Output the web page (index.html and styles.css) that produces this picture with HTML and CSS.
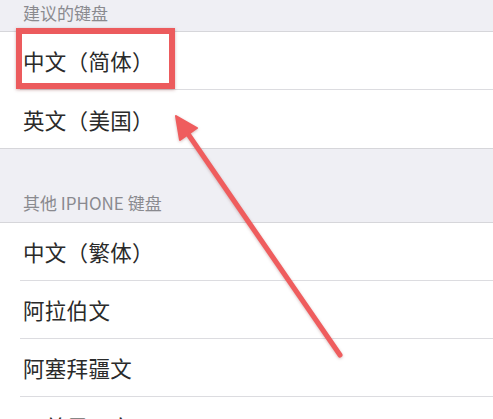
FILE: index.html
```html
<!DOCTYPE html>
<html lang="zh-CN">
<head>
<meta charset="utf-8">
<link rel="stylesheet" href="styles.css">
</head>
<body>
<div class="page">
  <div class="section-header first">建议的键盘</div>
  <div class="group">
    <div class="row"><span class="label">中文（简体）</span></div>
    <div class="row"><span class="label">英文（美国）</span></div>
  </div>
  <div class="section-header second">其他 IPHONE 键盘</div>
  <div class="group">
    <div class="row"><span class="label">中文（繁体）</span></div>
    <div class="row"><span class="label">阿拉伯文</span></div>
    <div class="row"><span class="label">阿塞拜疆文</span></div>
    <div class="row"><span class="label">亚美尼亚文</span></div>
  </div>
  <div class="highlight"></div>
  <svg class="arrow" width="493" height="419" viewBox="0 0 493 419">
    <line x1="340" y1="355" x2="186" y2="131" stroke="#ef5d5e" stroke-width="5" stroke-linecap="round"/>
    <polygon points="176,116 197,128 180,140" fill="#ef5d5e" stroke="#ef5d5e" stroke-width="2" stroke-linejoin="round"/>
  </svg>
</div>
</body>
</html>
```

FILE: styles.css
```css
html, body {
  margin: 0;
  padding: 0;
  background: #efeff4;
}
.page {
  position: relative;
  width: 493px;
  height: 419px;
  overflow: hidden;
  font-family: "Noto Sans CJK SC", "Noto Sans", sans-serif;
}
.section-header {
  box-sizing: border-box;
  padding-left: 23px;
  font-size: 17px;
  color: #8a8a8f;
  display: flex;
  align-items: flex-end;
}
.section-header.first {
  height: 31px;
  padding-bottom: 6px;
}
.section-header.second {
  height: 73px;
  padding-bottom: 7px;
}
.group {
  background: #ffffff;
  border-top: 1px solid #d6d6da;
  border-bottom: 1px solid #d6d6da;
}
.row {
  box-sizing: border-box;
  height: 58px;
  margin-left: 20px;
  padding-left: 3px;
  display: flex;
  align-items: center;
  border-bottom: 1px solid #dcdce0;
}
.row:last-child {
  border-bottom: none;
}
.label {
  font-size: 21.5px;
  color: #2a2a2a;
  letter-spacing: 0.3px;
}
.highlight {
  position: absolute;
  left: 16px;
  top: 28px;
  width: 159px;
  height: 61px;
  box-sizing: border-box;
  border: 6px solid #ec5b5d;
  box-shadow: 0 1px 3px rgba(120, 40, 40, 0.35);
}
.arrow {
  position: absolute;
  left: 0;
  top: 0;
  filter: drop-shadow(0 1px 1.5px rgba(120, 40, 40, 0.3));
}
```
